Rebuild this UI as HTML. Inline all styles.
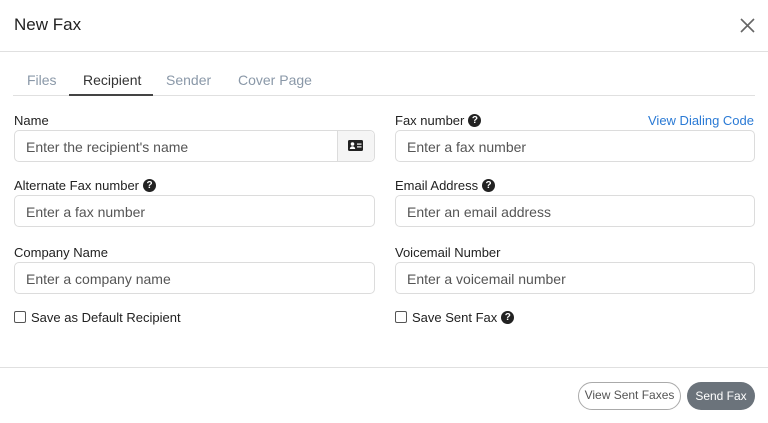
<!DOCTYPE html><html><head><style>
*{box-sizing:border-box;margin:0;padding:0}
body{width:768px;height:423px;background:#fff;font-family:"Liberation Sans",sans-serif;color:#222;position:relative;overflow:hidden}
.a{position:absolute}
.t{font-size:17px;left:14px;top:15px;color:#222}
.hl{left:0;top:51px;width:768px;height:1px;background:#e0e0e0}
.tab{top:72px;font-size:14px;color:#8a98a8}
.lbl{font-size:13px;color:#222;line-height:15px}
.in{height:32px;border:1px solid #dcdcdc;border-radius:5px;font-size:14px;color:#555;padding:8px 11px}
.q{position:relative;top:1px;display:inline-block;width:13px;height:13px;border-radius:50%;background:#222;color:#fff;font-size:10px;font-weight:bold;text-align:center;line-height:13px;vertical-align:top;margin-left:4px}
.cb{width:12px;height:12px;border:1px solid #555;border-radius:2px;display:inline-block;vertical-align:top;margin-right:5px;margin-top:1px}
</style></head><body>
<div class="a t">New Fax</div>
<svg class="a" style="left:740px;top:18px" width="15" height="15"><path d="M1 1L14 14M14 1L1 14" stroke="#666" stroke-width="1.6"/></svg>
<div class="a hl"></div>
<div class="a tab" style="left:27px">Files</div>
<div class="a tab" style="left:83px;color:#333">Recipient</div>
<div class="a tab" style="left:166px">Sender</div>
<div class="a tab" style="left:238px">Cover Page</div>
<div class="a" style="left:13px;top:95px;width:742px;height:1px;background:#e0e0e0"></div>
<div class="a" style="left:69px;top:94px;width:84px;height:2px;background:#444"></div>

<div class="a lbl" style="left:14px;top:113px">Name</div>
<div class="a in" style="left:14px;top:130px;width:361px">Enter the recipient's name</div>
<div class="a" style="left:337px;top:131px;width:37px;height:30px;background:#f5f5f5;border-left:1px solid #dcdcdc;border-radius:0 5px 5px 0"></div>
<svg class="a" style="left:348px;top:140px" width="15" height="11"><rect width="15" height="11" rx="1.5" fill="#222"/><circle cx="4.5" cy="4" r="1.8" fill="#fff"/><path d="M1.8 9a2.7 2.7 0 0 1 5.4 0z" fill="#fff"/><rect x="9" y="3.5" width="4.5" height="1.2" fill="#fff"/><rect x="9" y="6.3" width="4.5" height="1.2" fill="#fff"/></svg>

<div class="a lbl" style="left:395px;top:113px">Fax number<span class="q">?</span></div>
<div class="a lbl" style="left:648px;top:113px;color:#2a7ad5">View Dialing Code</div>
<div class="a in" style="left:395px;top:130px;width:360px">Enter a fax number</div>

<div class="a lbl" style="left:14px;top:178px">Alternate Fax number<span class="q">?</span></div>
<div class="a in" style="left:14px;top:195px;width:361px">Enter a fax number</div>
<div class="a lbl" style="left:395px;top:178px">Email Address<span class="q">?</span></div>
<div class="a in" style="left:395px;top:195px;width:360px">Enter an email address</div>

<div class="a lbl" style="left:14px;top:245px">Company Name</div>
<div class="a in" style="left:14px;top:262px;width:361px">Enter a company name</div>
<div class="a lbl" style="left:395px;top:245px">Voicemail Number</div>
<div class="a in" style="left:395px;top:262px;width:360px">Enter a voicemail number</div>

<div class="a lbl" style="left:14px;top:310px"><span class="cb"></span>Save as Default Recipient</div>
<div class="a lbl" style="left:395px;top:310px"><span class="cb"></span>Save Sent Fax<span class="q">?</span></div>

<div class="a" style="left:0;top:367px;width:768px;height:1px;background:#e0e0e0"></div>
<div class="a" style="left:578px;top:382px;width:103px;height:28px;border:1.5px solid #aaa;border-radius:14px;font-size:12px;color:#555;text-align:center;line-height:25px">View Sent Faxes</div>
<div class="a" style="left:687px;top:382px;width:68px;height:28px;background:#6b737b;border-radius:14px;font-size:12px;color:#fff;text-align:center;line-height:28px">Send Fax</div>
</body></html>
